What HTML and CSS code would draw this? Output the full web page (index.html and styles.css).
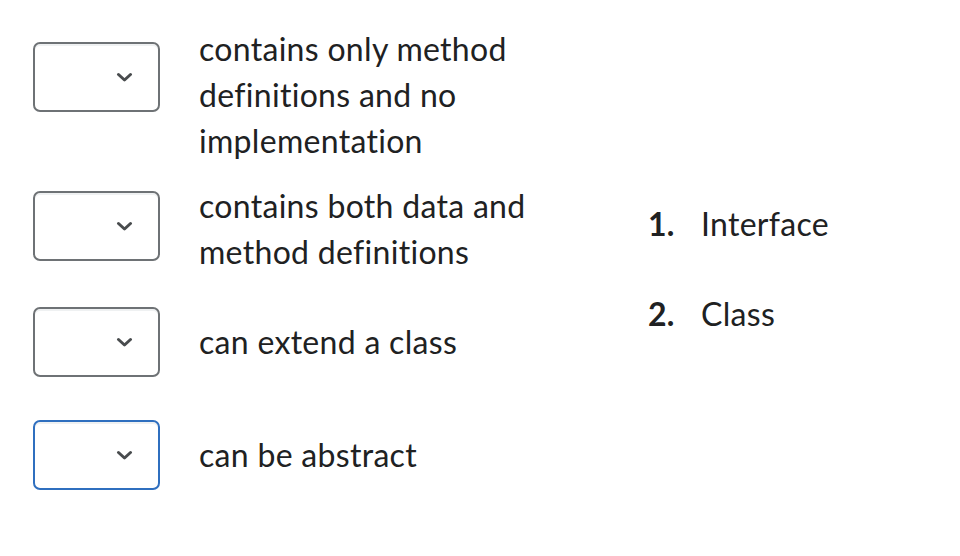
FILE: index.html
```html
<!DOCTYPE html>
<html lang="en">
<head>
    <meta charset="UTF-8">
    <meta name="viewport" content="width=device-width, initial-scale=1.0">
    <title>Matching question</title>
    <link rel="stylesheet" href="styles.css">
</head>
<body>
    <div class="question">
        <div class="pairs">
            <div class="pair pair-top">
                <div class="choice">
                    <svg class="chevron" width="17" height="10" viewBox="0 0 17 10"><path d="M2.5 2.5l6 5.5 6-5.5" fill="none" stroke="#494c4e" stroke-width="3" stroke-linecap="round" stroke-linejoin="round"/></svg>
                </div>
                <div class="prompt">contains only method<br>definitions and no<br>implementation</div>
            </div>

            <div class="pair">
                <div class="choice raised">
                    <svg class="chevron" width="17" height="10" viewBox="0 0 17 10"><path d="M2.5 2.5l6 5.5 6-5.5" fill="none" stroke="#494c4e" stroke-width="3" stroke-linecap="round" stroke-linejoin="round"/></svg>
                </div>
                <div class="prompt">contains both data and<br>method definitions</div>
            </div>

            <div class="pair">
                <div class="choice">
                    <svg class="chevron" width="17" height="10" viewBox="0 0 17 10"><path d="M2.5 2.5l6 5.5 6-5.5" fill="none" stroke="#494c4e" stroke-width="3" stroke-linecap="round" stroke-linejoin="round"/></svg>
                </div>
                <div class="prompt">can extend a class</div>
            </div>

            <div class="pair">
                <div class="choice focused">
                    <svg class="chevron" width="17" height="10" viewBox="0 0 17 10"><path d="M2.5 2.5l6 5.5 6-5.5" fill="none" stroke="#494c4e" stroke-width="3" stroke-linecap="round" stroke-linejoin="round"/></svg>
                </div>
                <div class="prompt">can be abstract</div>
            </div>
        </div>

        <ol class="answers">
            <li><span class="num">1.</span>Interface</li>
            <li><span class="num">2.</span>Class</li>
        </ol>
    </div>
</body>
</html>
```

FILE: styles.css
```css
* {
    margin: 0;
    padding: 0;
    box-sizing: border-box;
}

body {
    background: #ffffff;
    color: #202122;
    font-family: Lato, "Open Sans", sans-serif;
    font-size: 32px;
    line-height: 46px;
    letter-spacing: 0.3px;
    font-variant-ligatures: none;
}

.question {
    display: flex;
    padding: 26px 0 0 33px;
}

.pairs {
    display: flex;
    flex-direction: column;
    gap: 17px;
    width: 615px;
}

.pair {
    display: flex;
    align-items: center;
    gap: 39px;
    min-height: 96px;
}

.pair-top {
    align-items: flex-start;
}

.pair-top .choice {
    margin-top: 16px;
}

.choice {
    flex: none;
    width: 127px;
    height: 70px;
    border: 2px solid #6e7275;
    border-radius: 7px;
    box-shadow: inset 0 2px 0 0 rgba(177, 185, 190, 0.2);
    display: flex;
    align-items: center;
    justify-content: flex-end;
    padding-right: 25px;
}

.choice.raised {
    margin-bottom: 6px;
}

.choice.focused {
    border-color: #2f6fbf;
}

.chevron {
    display: block;
}

.answers {
    list-style: none;
    margin-top: 175px;
    display: flex;
    flex-direction: column;
    gap: 44px;
}

.answers li {
    display: flex;
}

.num {
    font-weight: 700;
    width: 53px;
}
```
